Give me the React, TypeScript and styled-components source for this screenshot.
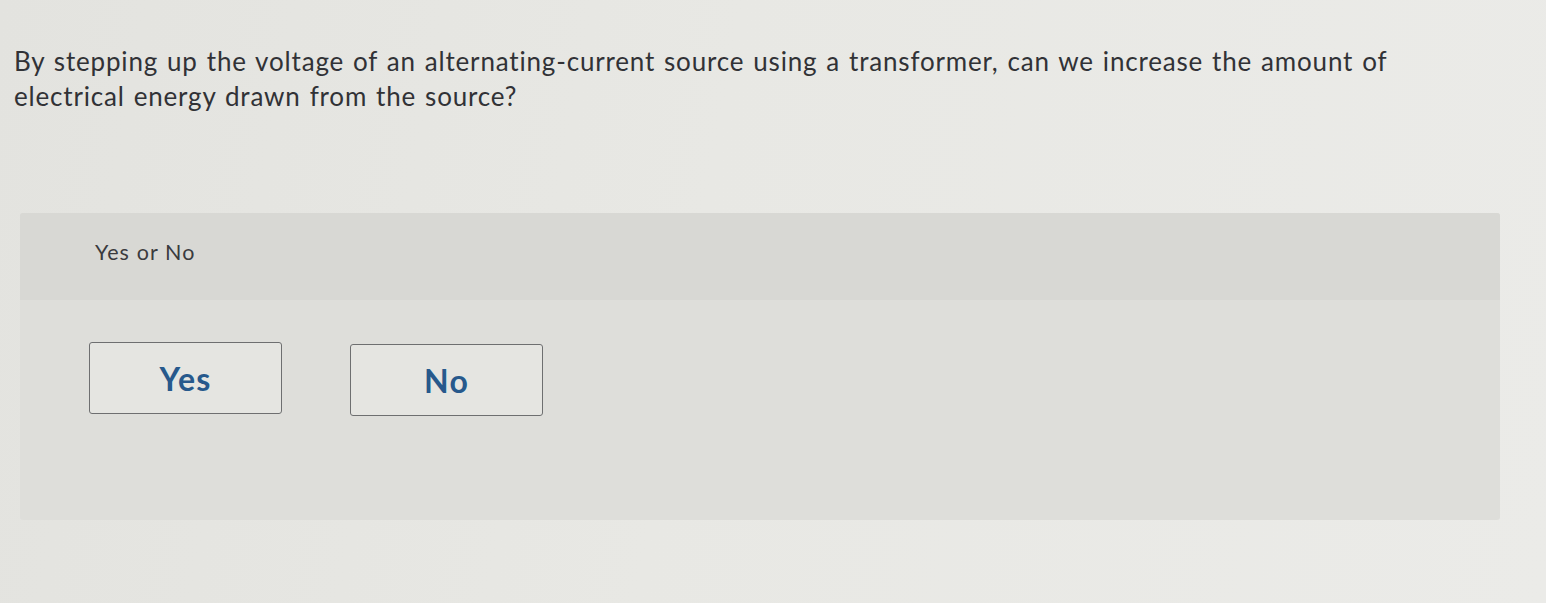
import styled, { createGlobalStyle } from "styled-components";

const GlobalStyle = createGlobalStyle`
	html, body {
		margin: 0;
		padding: 0;
		background: #e6e6e2;
	}
	body {
		font-family: Lato, "Open Sans", Arial, sans-serif;
		color: #34363a;
	}
`;

const Page = styled.div`
	width: 1546px;
	height: 603px;
	padding: 44px 0 0 14px;
	box-sizing: border-box;
	background: linear-gradient(100deg, #e3e3df 0%, #e8e8e4 45%, #ebebe8 100%);
	overflow: hidden;
`;

const Question = styled.p`
	margin: 0;
	width: 1420px;
	font-size: 26px;
	line-height: 35px;
	letter-spacing: 0.82px;
	word-spacing: 1.5px;
	color: #313236;
`;

const Panel = styled.section`
	margin: 99px 0 0 6px;
	width: 1480px;
	border-radius: 3px;
	overflow: hidden;
	background: #dededa;
`;

const PanelHeader = styled.div`
	height: 87px;
	padding: 0 0 10px 75px;
	box-sizing: border-box;
	display: flex;
	align-items: center;
	background: #d8d8d4;
	font-size: 21.5px;
	letter-spacing: 1.1px;
	color: #3a3b3e;
`;

const Choices = styled.div`
	height: 220px;
	padding: 42px 0 0 69px;
	box-sizing: border-box;
	display: flex;
	align-items: flex-start;
	gap: 68px;
`;

const Choice = styled.button<{ $drop?: number }>`
	width: 193px;
	height: 72px;
	margin-top: ${(p) => p.$drop ?? 0}px;
	background: #e5e5e1;
	border: 1.5px solid #6e6f70;
	border-radius: 3px;
	font-family: Lato, "Open Sans", Arial, sans-serif;
	font-size: 32px;
	font-weight: 700;
	letter-spacing: 1.2px;
	color: #27598c;
	cursor: pointer;
`;

export default function App() {
	return (
		<>
			<GlobalStyle />
			<Page>
				<Question>
					By stepping up the voltage of an alternating-current source using a transformer, can we increase the amount of electrical energy drawn from the source?
				</Question>
				<Panel>
					<PanelHeader>Yes or No</PanelHeader>
					<Choices>
						<Choice>Yes</Choice>
						<Choice $drop={2}>No</Choice>
					</Choices>
				</Panel>
			</Page>
		</>
	);
}
